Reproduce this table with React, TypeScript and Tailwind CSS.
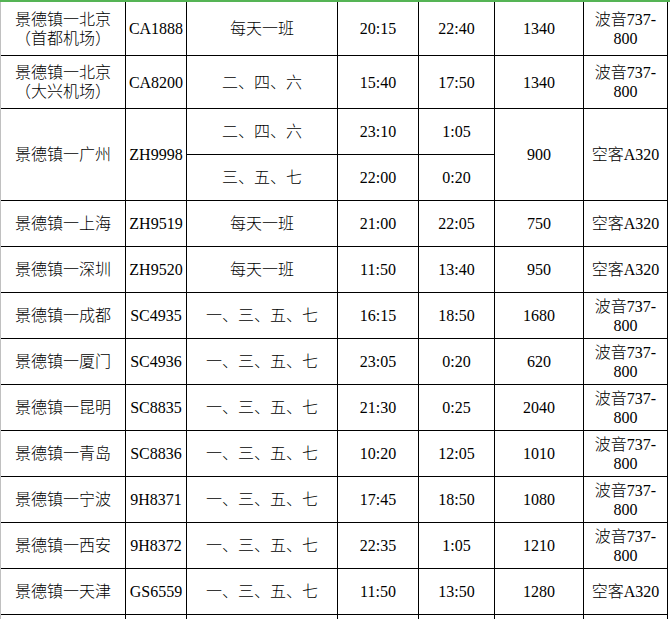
import { Fragment, FunctionComponent } from 'react'

interface FlightRow {
  route: string[]
  flight: string
  days: string
  dep: string
  arr: string
  km: string
  plane: string[]
}

const B737 = ["波音737-", "800"]
const A320 = ["空客A320"]

const rows: FlightRow[] = [
  { route: ["景德镇一上海"], flight: "ZH9519", days: "每天一班", dep: "21:00", arr: "22:05", km: "750", plane: A320 },
  { route: ["景德镇一深圳"], flight: "ZH9520", days: "每天一班", dep: "11:50", arr: "13:40", km: "950", plane: A320 },
  { route: ["景德镇一成都"], flight: "SC4935", days: "一、三、五、七", dep: "16:15", arr: "18:50", km: "1680", plane: B737 },
  { route: ["景德镇一厦门"], flight: "SC4936", days: "一、三、五、七", dep: "23:05", arr: "0:20", km: "620", plane: B737 },
  { route: ["景德镇一昆明"], flight: "SC8835", days: "一、三、五、七", dep: "21:30", arr: "0:25", km: "2040", plane: B737 },
  { route: ["景德镇一青岛"], flight: "SC8836", days: "一、三、五、七", dep: "10:20", arr: "12:05", km: "1010", plane: B737 },
  { route: ["景德镇一宁波"], flight: "9H8371", days: "一、三、五、七", dep: "17:45", arr: "18:50", km: "1080", plane: B737 },
  { route: ["景德镇一西安"], flight: "9H8372", days: "一、三、五、七", dep: "22:35", arr: "1:05", km: "1210", plane: B737 },
  { route: ["景德镇一天津"], flight: "GS6559", days: "一、三、五、七", dep: "11:50", arr: "13:50", km: "1280", plane: A320 },
]

const Cell: FunctionComponent<{ lines?: string[]; text?: string; className?: string }> = ({ lines, text, className = "" }) => (
  <div className={"bg-white flex flex-col items-center justify-center text-center leading-[19px] " + className}>
    {lines ? lines.map((l, i) => <span key={i}>{l}</span>) : <span>{text}</span>}
  </div>
)

const App: FunctionComponent = () => {
  return (
    <div className="w-[670px] bg-white text-black text-[16px] font-light"
      style={{ fontFamily: '"Liberation Serif", "Noto Sans CJK SC", serif' }}>
      <div className="h-[2px] w-full bg-[#55b455]"></div>
      <div className="grid w-[668px] grid-cols-[124px_60px_150px_80px_75px_88px_83px]
      grid-rows-[53px_52px_45px_45px] auto-rows-[45px] gap-px bg-black pr-px border-l border-[#c0c0c0]">
        {/* 北京 首都 */}
        <Cell lines={["景德镇一北京", "（首都机场）"]} />
        <Cell text="CA1888" />
        <Cell text="每天一班" />
        <Cell text="20:15" />
        <Cell text="22:40" />
        <Cell text="1340" />
        <Cell lines={B737} />
        {/* 北京 大兴 */}
        <Cell lines={["景德镇一北京", "（大兴机场）"]} />
        <Cell text="CA8200" />
        <Cell text="二、四、六" />
        <Cell text="15:40" />
        <Cell text="17:50" />
        <Cell text="1340" />
        <Cell lines={B737} />
        {/* 广州, two schedules */}
        <Cell text="景德镇一广州" className="row-span-2" />
        <Cell text="ZH9998" className="row-span-2" />
        <Cell text="二、四、六" />
        <Cell text="23:10" />
        <Cell text="1:05" />
        <Cell text="900" className="row-span-2" />
        <Cell lines={A320} className="row-span-2" />
        <Cell text="三、五、七" />
        <Cell text="22:00" />
        <Cell text="0:20" />
        {rows.map((r) => (
          <Fragment key={r.flight}>
            <Cell lines={r.route} />
            <Cell text={r.flight} />
            <Cell text={r.days} />
            <Cell text={r.dep} />
            <Cell text={r.arr} />
            <Cell text={r.km} />
            <Cell lines={r.plane} />
          </Fragment>
        ))}
        {[0, 1, 2, 3, 4, 5, 6].map((i) => <Cell key={"blank" + i} text="" />)}
      </div>
    </div>
  )
}

export default App
